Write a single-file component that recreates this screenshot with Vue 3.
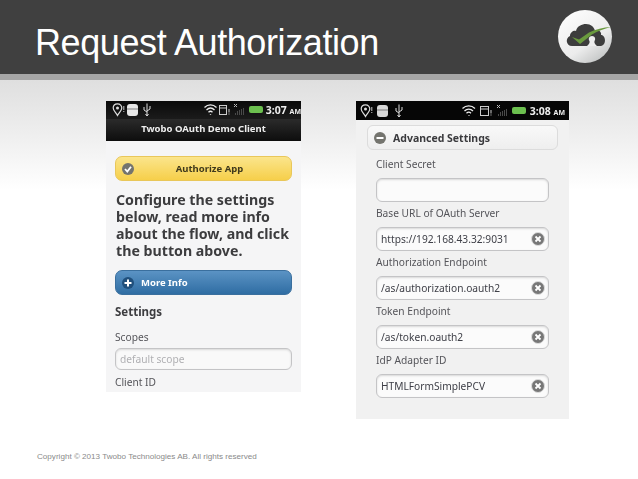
<template>
  <div class="slide">
    <header class="head">
      <h1>Request Authorization</h1>
      <svg class="logo" viewBox="0 0 56 58" width="56" height="58">
        <defs>
          <linearGradient id="lg" x1="0.2" y1="0" x2="0.9" y2="1">
            <stop offset="0" stop-color="#fdfdfd" />
            <stop offset="0.6" stop-color="#ececec" />
            <stop offset="1" stop-color="#b9bcbc" />
          </linearGradient>
        </defs>
        <ellipse cx="28" cy="27.500" rx="27" ry="26.500" fill="url(#lg)" />
        <path d="M15 37C9 37 8 29 13 27C13 23 17 21 19 22C20 17 25 15 29 15C34 15 37 18 38 22C41 20 45 23 44 26C49 26 50 37 43 37Z" fill="#3d3d3d" />
        <path d="M30 37C32 35 33 34 32.500 32C31 30 32 27 35 27C38 27 39 30 37.500 32C37 34 38 35 40 37Z" fill="#ededed" />
        <path d="M15 28L22 30.500L32 23.500C39 20 46 18.500 54 18C47 20 40 22 35 25.500L23 35Z" fill="#6a9a3e" />
      </svg>
    </header>
    <div class="band"></div>
    <main class="stage">
      <section class="phone first">
        <div class="status">
          <svg viewBox="0 0 44 14" width="44" height="14">
            <path d="M7.500 .8C4.800 .8 3.200 2.800 3.200 5C3.200 7.500 6 9.500 7.500 12.500C9 9.500 11.800 7.500 11.800 5C11.800 2.800 10.200 .8 7.500 .8Z" fill="none" stroke="#ddd" stroke-width="1.200" />
            <circle cx="7.500" cy="5" r="1.500" fill="#ddd" />
            <path d="M13.800 3V7M13.800 8V9" stroke="#ccc" />
            <rect x="17" y="1" width="11" height="12" rx="3" fill="#e8e8e8" />
            <path d="M17 6H28" stroke="#555" stroke-width=".7" />
            <path d="M37 .5V13M37 13L35.500 11M37 13L38.500 11M34 4V7L37 9M40 3V6L37 8" stroke="#ddd" fill="none" />
          </svg>
          <div class="st-right">
            <svg viewBox="0 0 60 14" width="60" height="14">
              <path d="M.5 4.500C4 1 9 1 12.500 4.500M2.500 7C5 4.500 8 4.500 10.500 7M4.500 9.200C5.800 8 7.200 8 8.500 9.200" stroke="#eee" stroke-width="1.300" fill="none" />
              <path d="M5.500 11L6.500 12L7.500 11Z" fill="#eee" />
              <rect x="15.500" y="2.500" width="7" height="9" fill="none" stroke="#ccc" />
              <path d="M15.500 5H22.500" stroke="#ccc" />
              <path d="M25 6V9.500M25 10.500V11.500" stroke="#ccc" />
              <path d="M30 1L33 4M33 1L30 4" stroke="#bbb" />
              <path d="M31.500 12V10M33.500 12V8M35.500 12V7M37.500 12V6M39.500 12V5" stroke="#4a4a4a" />
              <rect x="45" y="3" width="14" height="7" rx="2" fill="#6cc04f" />
            </svg>
            <span class="clock">3:07 <small>AM</small></span>
          </div>
        </div>
        <div class="title">Twobo OAuth Demo Client</div>
        <div class="body one">
          <div class="btn yellow">
            <span class="ico grey">
              <svg viewBox="0 0 12 12" width="12" height="12"><path d="M3 6L5.300 8.500L9 3.800" stroke="#fff" stroke-width="1.800" fill="none" /></svg>
            </span>
            <span class="btn-center">Authorize App</span>
          </div>
          <p class="lead">Configure the settings<br />below, read more info<br />about the flow, and click<br />the button above.</p>
          <div class="btn blue">
            <span class="ico dark">
              <svg viewBox="0 0 12 12" width="12" height="12"><path d="M6 2.500V9.500M2.500 6H9.500" stroke="#fff" stroke-width="2" /></svg>
            </span>
            <span>More Info</span>
          </div>
          <h2>Settings</h2>
          <label class="scopes">Scopes</label>
          <div class="field placeholder">default scope</div>
          <label class="client">Client ID</label>
        </div>
      </section>

      <section class="phone second">
        <div class="status">
          <svg viewBox="0 0 47 14" width="47" height="14">
            <path d="M7.500 .8C4.800 .8 3.200 2.800 3.200 5C3.200 7.500 6 9.500 7.500 12.500C9 9.500 11.800 7.500 11.800 5C11.800 2.800 10.200 .8 7.500 .8Z" fill="none" stroke="#ddd" stroke-width="1.200" />
            <circle cx="7.500" cy="5" r="1.500" fill="#ddd" />
            <path d="M13.800 3V7M13.800 8V9" stroke="#ccc" />
            <rect x="19" y="1" width="11" height="12" rx="3" fill="#d8d8d8" />
            <path d="M19 6H30" stroke="#555" stroke-width=".7" />
            <path d="M41 .5V13M41 13L39.500 11M41 13L42.500 11M38 4V7L41 9M44 3V6L41 8" stroke="#ddd" fill="none" />
          </svg>
          <div class="st-right wide">
            <svg viewBox="0 0 66 14" width="66" height="14">
              <path d="M.5 4.500C4 1 9.500 1 13 4.500M2.500 7C5 4.500 8.500 4.500 11 7M4.500 9.200C5.800 8 7.700 8 9 9.200" stroke="#eee" stroke-width="1.300" fill="none" />
              <path d="M6 11L7 12L8 11Z" fill="#eee" />
              <rect x="18.500" y="2.500" width="8" height="9" fill="none" stroke="#ccc" />
              <path d="M18.500 5H26.500" stroke="#ccc" />
              <path d="M29 6V9.500M29 10.500V11.500" stroke="#ccc" />
              <path d="M35 1L38 4M38 1L35 4" stroke="#bbb" />
              <path d="M36.500 12V10M38.500 12V8M40.500 12V7M42.500 12V6M44.500 12V5" stroke="#4a4a4a" />
              <rect x="50" y="3" width="14" height="7" rx="2" fill="#6cc04f" />
            </svg>
            <span class="clock">3:08 <small>AM</small></span>
          </div>
        </div>
        <div class="body two">
          <div class="collapse">
            <span class="ico grey">
              <svg viewBox="0 0 12 12" width="12" height="12"><path d="M2.500 6H9.500" stroke="#fff" stroke-width="2" /></svg>
            </span>
            <span>Advanced Settings</span>
          </div>
          <div class="form">
            <div v-for="f in fields" :key="f.label" class="group">
              <label>{{ f.label }}</label>
              <div class="field">
                <span>{{ f.value }}</span>
                <span v-if="f.value" class="clear">
                  <svg viewBox="0 0 12 12" width="12" height="12"><path d="M3.500 3.500L8.500 8.500M8.500 3.500L3.500 8.500" stroke="#fff" stroke-width="1.800" /></svg>
                </span>
              </div>
            </div>
          </div>
        </div>
      </section>
    </main>
    <footer class="foot">Copyright © 2013 Twobo Technologies AB. All rights reserved</footer>
  </div>
</template>

<script setup>
const fields = [
  { label: 'Client Secret', value: '' },
  { label: 'Base URL of OAuth Server', value: 'https://192.168.43.32:9031' },
  { label: 'Authorization Endpoint', value: '/as/authorization.oauth2' },
  { label: 'Token Endpoint', value: '/as/token.oauth2' },
  { label: 'IdP Adapter ID', value: 'HTMLFormSimplePCV' }
]
</script>

<style>
html, body { margin: 0; background: #fff; }
</style>

<style scoped>
.slide {
  width: 638px;
  height: 479px;
  overflow: hidden;
  display: flex;
  flex-direction: column;
  font-family: "Liberation Sans", Arial, sans-serif;
  background: linear-gradient(#dfdfdf 0, #f0f0f0 60px, #fff 110px);
  background-size: 100% 200px;
  background-position: 0 80px;
  background-repeat: no-repeat;
}
.head {
  height: 74px;
  flex: none;
  background: #404040;
  display: flex;
  align-items: center;
  justify-content: space-between;
  padding: 0 25px 0 35px;
  box-sizing: border-box;
}
h1 {
  margin: 11px 0 0;
  font-size: 36px;
  font-weight: 400;
  color: #fff;
  letter-spacing: -0.4px;
  white-space: nowrap;
}
.logo { flex: none; margin-top: 1px; }
.band { height: 6px; flex: none; background: #a6a6a6; }
.stage {
  height: 339px;
  flex: none;
  display: flex;
  align-items: flex-start;
  gap: 55px;
  padding: 21px 0 0 106px;
  box-sizing: border-box;
  font-family: "Noto Sans", "Open Sans", sans-serif;
}
.phone {
  flex: none;
  background: #f5f5f6;
  filter: blur(0.35px);
}
.first { width: 195px; height: 291px; }
.second { width: 213px; height: 318px; background: #f1f1f1; }
.status {
  height: 18px;
  background: linear-gradient(#0a0a0a, #1b1b1b);
  display: flex;
  align-items: center;
  justify-content: space-between;
  padding: 0 0 0 4px;
  color: #eee;
}
.second .status { height: 19px; background: #060606; padding-right: 4px; padding-left: 2px; }
.st-right { display: flex; align-items: center; gap: 2px; }
.clock { font-size: 10.500px; font-weight: 700; white-space: nowrap; }
.clock small { font-size: 7px; }
.title {
  height: 22px;
  padding-bottom: 3px;
  box-sizing: border-box;
  background: linear-gradient(#2b2b2b, #0d0d0d);
  color: #eee;
  font-size: 9.500px;
  font-weight: 700;
  display: flex;
  align-items: center;
  justify-content: center;
}
.one { padding: 15px 9px 0; }
.btn {
  height: 25px;
  border-radius: 7px;
  display: flex;
  align-items: center;
  box-sizing: border-box;
  padding-left: 6px;
  gap: 7px;
  font-size: 9.500px;
  font-weight: 700;
}
.yellow {
  background: linear-gradient(#fbe58c, #f6cf4a);
  border: 1px solid #e9c75a;
  color: #403a1c;
}
.btn-center { flex: 1; text-align: center; padding-right: 13px; }
.blue {
  background: linear-gradient(#5b93c4, #2f6da3);
  border: 1px solid #3a6f9e;
  color: #fff;
  margin-top: 11px;
}
.ico {
  width: 12px;
  height: 12px;
  border-radius: 50%;
  display: flex;
  flex: none;
}
.grey { background: #74746e; }
.dark { background: #1f4f7c; }
.lead {
  margin: 10px 0 0;
  padding-left: 1px;
  font-size: 14.200px;
  line-height: 17px;
  font-weight: 700;
  color: #3c3c3e;
  white-space: nowrap;
}
h2 {
  margin: 9px 0 0;
  font-size: 11.500px;
  line-height: 16px;
  font-weight: 700;
  color: #3d3d40;
}
label {
  display: block;
  font-size: 10.200px;
  line-height: 14px;
  color: #55555a;
}
.scopes { margin-top: 10px; }
.client { margin-top: 5px; }
.field {
  height: 22px;
  box-sizing: border-box;
  border: 1px solid #c4c4c6;
  border-radius: 6px;
  background: #f9f9f9;
  box-shadow: inset 0 1px 2px #d8d8d8;
  margin-top: 4px;
  display: flex;
  align-items: center;
  justify-content: space-between;
  padding: 0 3px 0 4px;
  font-size: 10.200px;
  color: #3f4048;
}
.placeholder { color: #b0b0b3; margin-top: 4px; }
.two { padding: 5px 11px 0; }
.collapse {
  height: 25px;
  box-sizing: border-box;
  border: 1px solid #dcdcdc;
  border-radius: 6px;
  background: linear-gradient(#f9f9f9, #eeeeee);
  display: flex;
  align-items: center;
  gap: 7px;
  padding-left: 6px;
  font-size: 10.500px;
  font-weight: 700;
  color: #3a3a3d;
}
.form { padding: 7px 9px 0; }
.group { margin-bottom: 4px; }
.group .field { margin-top: 7px; height: 24px; background: #fbfbfb; }
.clear {
  width: 14px;
  height: 14px;
  border-radius: 50%;
  background: #777;
  border: 1px solid #ddd;
  box-sizing: border-box;
  display: flex;
  align-items: center;
  justify-content: center;
  flex: none;
}
.foot {
  padding: 0 0 0 37px;
  margin-top: 32px;
  font-size: 8.100px;
  line-height: 11px;
  color: #8a8a8a;
  white-space: nowrap;
}
</style>
